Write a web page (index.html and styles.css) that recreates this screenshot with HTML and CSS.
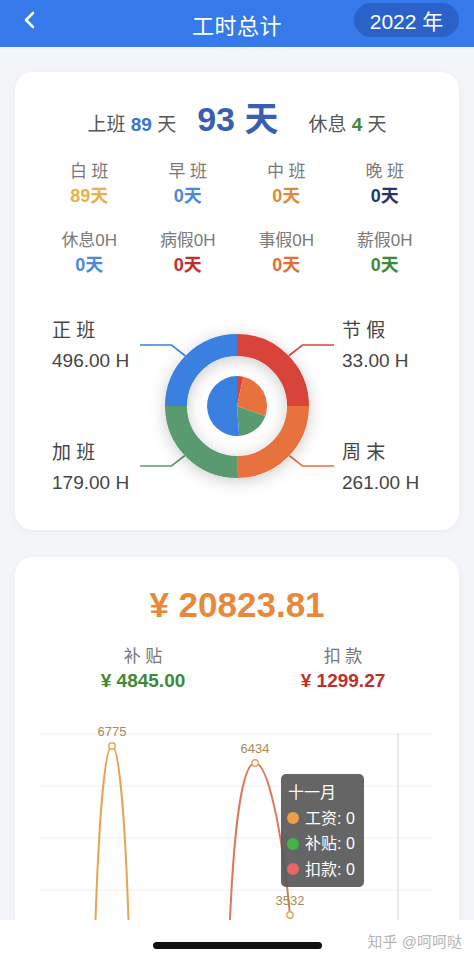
FILE: index.html
```html
<!DOCTYPE html>
<html lang="zh-CN">
<head>
  <meta charset="UTF-8" />
  <meta name="viewport" content="width=device-width, initial-scale=1" />
  <title>工时总计</title>
  <link rel="stylesheet" href="styles.css">
</head>
<body>
  <header class="topbar">
    <svg class="back" width="14" height="18" viewBox="0 0 14 18">
      <path d="M10 2 L3 9 L10 16" fill="none" stroke="#fff" stroke-width="2.6" stroke-linecap="round" stroke-linejoin="round"/>
    </svg>
    <h1>工时总计</h1>
    <div class="year">2022 年</div>
  </header>

  <main>
    <!-- Attendance card -->
    <section class="card days-card">
      <div class="summary">
        <span>上班 <b class="blue">89</b> 天</span>
        <span class="total">93 天</span>
        <span>休息 <b class="green">4</b> 天</span>
      </div>

      <div class="shift-grid">
        <div class="cell"><div class="label">白 班</div><div class="value gold">89天</div></div>
        <div class="cell"><div class="label">早 班</div><div class="value sky">0天</div></div>
        <div class="cell"><div class="label">中 班</div><div class="value amber">0天</div></div>
        <div class="cell"><div class="label">晚 班</div><div class="value navy">0天</div></div>
        <div class="cell"><div class="label">休息0H</div><div class="value sky">0天</div></div>
        <div class="cell"><div class="label">病假0H</div><div class="value red">0天</div></div>
        <div class="cell"><div class="label">事假0H</div><div class="value orange">0天</div></div>
        <div class="cell"><div class="label">薪假0H</div><div class="value green">0天</div></div>
      </div>

      <div class="hours">
        <div class="side left">
          <div class="tag"><div>正 班</div><div>496.00 H</div></div>
          <div class="tag"><div>加 班</div><div>179.00 H</div></div>
        </div>
        <svg class="donut" width="194" height="210" viewBox="0 0 194 210">
          <defs>
            <filter id="glow" x="-40%" y="-40%" width="180%" height="180%">
              <feDropShadow dx="0" dy="3" stdDeviation="8" flood-color="#000" flood-opacity="0.2"/>
            </filter>
          </defs>
          <!-- leader lines -->
          <polyline points="0,45 31.5,45 45.5,56" fill="none" stroke="#3a80e0" stroke-width="1.6"/>
          <polyline points="194,45 162.5,45 148.5,56" fill="none" stroke="#d9443a" stroke-width="1.6"/>
          <polyline points="0,166 31.5,166 45.5,155" fill="none" stroke="#5a9a70" stroke-width="1.6"/>
          <polyline points="194,166 162.5,166 148.5,155" fill="none" stroke="#e8723e" stroke-width="1.6"/>
          <g filter="url(#glow)">
            <circle cx="97" cy="106" r="61" fill="none" stroke="#fff" stroke-width="22"/>
          </g>
          <path d="M36 106 A61 61 0 0 1 97 45" fill="none" stroke="#3a80e0" stroke-width="22"/>
          <path d="M97 45 A61 61 0 0 1 158 106" fill="none" stroke="#d9443a" stroke-width="22"/>
          <path d="M158 106 A61 61 0 0 1 97 167" fill="none" stroke="#e8723e" stroke-width="22"/>
          <path d="M97 167 A61 61 0 0 1 36 106" fill="none" stroke="#5a9a70" stroke-width="22"/>
          <!-- inner pie: 33 / 261 / 179 / 496 -->
          <path d="M97 106 L97 76 A30 30 0 0 1 103.39 76.69 Z" fill="#d9443a"/>
          <path d="M97 106 L103.39 76.69 A30 30 0 0 1 125.31 115.92 Z" fill="#e8723e"/>
          <path d="M97 106 L125.31 115.92 A30 30 0 0 1 99.2 135.92 Z" fill="#5a9a70"/>
          <path d="M97 106 L99.2 135.92 A30 30 0 1 1 97 76 Z" fill="#3a80e0"/>
        </svg>
        <div class="side right">
          <div class="tag"><div>节 假</div><div>33.00 H</div></div>
          <div class="tag"><div>周 末</div><div>261.00 H</div></div>
        </div>
      </div>
    </section>

    <!-- Salary card -->
    <section class="card pay-card">
      <div class="amount">¥ 20823.81</div>
      <div class="pay-grid">
        <div class="cell"><div class="label">补 贴</div><div class="money green">¥ 4845.00</div></div>
        <div class="cell"><div class="label">扣 款</div><div class="money red">¥ 1299.27</div></div>
      </div>

      <div class="chart">
        <svg width="444" height="230" viewBox="15 715 444 230">
          <g stroke="#efefef" stroke-width="1">
            <line x1="40" y1="734" x2="432" y2="734"/>
            <line x1="40" y1="786" x2="432" y2="786"/>
            <line x1="40" y1="838" x2="432" y2="838"/>
            <line x1="40" y1="890" x2="432" y2="890"/>
          </g>
          <line x1="398" y1="733" x2="398" y2="945" stroke="#dedede" stroke-width="1.2"/>
          <path d="M95 935 C103 683 121 683 129 935" fill="none" stroke="#e6a457" stroke-width="2"/>
          <path d="M229 945 C233 830 242 763 255 763 C268 763 282 830 290 915" fill="none" stroke="#db7a5a" stroke-width="2"/>
          <circle cx="112" cy="746" r="3.2" fill="#fff" stroke="#e6a457" stroke-width="1.4"/>
          <circle cx="255" cy="763" r="3.2" fill="#fff" stroke="#e6a457" stroke-width="1.4"/>
          <circle cx="290" cy="915" r="3.2" fill="#fff" stroke="#e6a457" stroke-width="1.4"/>
          <g class="point-label">
            <text x="112" y="736" text-anchor="middle">6775</text>
            <text x="255" y="753" text-anchor="middle">6434</text>
            <text x="290" y="905" text-anchor="middle">3532</text>
          </g>
        </svg>
        <div class="tooltip">
          <div class="tip-title">十一月</div>
          <div class="tip-row"><i class="dot" style="background:#f0a044"></i>工资: 0</div>
          <div class="tip-row"><i class="dot" style="background:#43b343"></i>补贴: 0</div>
          <div class="tip-row"><i class="dot" style="background:#ea6565"></i>扣款: 0</div>
        </div>
      </div>
    </section>
  </main>

  <div class="home-bar">
    <span class="indicator"></span>
    <span class="mark">知乎 @呵呵哒</span>
  </div>
</body>
</html>
```

FILE: styles.css
```css
html, body {
  overflow: hidden;
}

body {
  margin: 0;
  font-family: "Liberation Sans", "Noto Sans CJK SC", sans-serif;
  background: #f3f5f8;
  color: #444;
  height: 961px;
}

.topbar {
  height: 47px;
  background: #3579ea;
  display: flex;
  align-items: center;
  justify-content: center;
  position: relative;
}

.topbar h1 {
  margin: 0;
  color: #fff;
  font-size: 22px;
  font-weight: 400;
  letter-spacing: 0.5px;
}

.back {
  position: absolute;
  left: 23px;
  top: 11px;
}

.year {
  position: absolute;
  right: 15px;
  top: 3px;
  width: 105px;
  height: 34px;
  border-radius: 17px;
  background: #2a62c9;
  color: #fff;
  font-size: 21px;
  display: flex;
  align-items: center;
  justify-content: center;
}

main {
  padding: 25px 15px 0;
  display: flex;
  flex-direction: column;
  gap: 27px;
}

.card {
  background: #fff;
  border-radius: 18px;
  box-shadow: 0 2px 10px rgba(0, 0, 0, 0.04);
}

/* attendance */
.days-card {
  padding: 27px 25px 20px;
}

.summary {
  display: flex;
  justify-content: center;
  align-items: baseline;
  font-size: 19px;
  line-height: 40px;
  color: #555;
}

.summary b {
  font-weight: 700;
}

.summary .total {
  margin: 0 30px 0 21px;
  font-size: 34px;
  font-weight: 700;
  color: #3a5fb2;
}

.shift-grid {
  margin-top: 15px;
  display: grid;
  grid-template-columns: repeat(4, 1fr);
  row-gap: 20px;
  text-align: center;
}

.shift-grid .label {
  font-size: 17px;
  line-height: 24px;
  color: #7a7a7a;
}

.shift-grid .value {
  font-size: 18px;
  line-height: 25px;
  font-weight: 700;
}

.gold { color: #e8b04b; }
.sky { color: #4a8ad8; }
.amber { color: #e0893a; }
.navy { color: #22376a; }
.red { color: #bf2f2b; }
.orange { color: #e0703a; }
.green { color: #3e8a36; }
.blue { color: #3c74c8; }

.hours {
  margin-top: 22px;
  display: grid;
  grid-template-columns: 1fr 194px 1fr;
  height: 210px;
}

.side {
  display: flex;
  flex-direction: column;
  justify-content: space-between;
  padding: 16px 0 12px;
  font-size: 19px;
  line-height: 30px;
  color: #444;
}

.side.left {
  padding-left: 12px;
}

.side.right {
  padding-left: 8px;
}

.donut {
  display: block;
  overflow: visible;
}

/* salary */
.pay-card {
  padding-top: 28px;
  height: 420px;
}

.amount {
  text-align: center;
  font-size: 35px;
  line-height: 40px;
  font-weight: 700;
  color: #e8883a;
}

.pay-grid {
  margin: 20px 0 0 28px;
  display: grid;
  grid-template-columns: 200px 200px;
  text-align: center;
}

.pay-grid .label {
  font-size: 17px;
  line-height: 24px;
  color: #777;
}

.pay-grid .money {
  font-size: 19px;
  line-height: 24px;
  font-weight: 700;
}

.chart {
  margin-top: 22px;
  position: relative;
}

.chart svg {
  display: block;
}

.point-label {
  font-size: 13px;
  fill: #a98a58;
}

.tooltip {
  position: absolute;
  left: 266px;
  top: 59px;
  width: 83px;
  height: 113px;
  box-sizing: border-box;
  padding: 6px 0 0 6px;
  border-radius: 5px;
  background: rgba(88, 88, 88, 0.92);
  color: #fff;
  font-size: 16px;
  line-height: 25.5px;
}

.tip-title {
  padding-left: 1px;
}

.tip-row {
  display: flex;
  align-items: center;
  gap: 6px;
  white-space: nowrap;
}

.dot {
  width: 12px;
  height: 12px;
  border-radius: 50%;
}

.home-bar {
  position: fixed;
  left: 0;
  right: 0;
  bottom: 0;
  height: 41px;
  background: #fff;
}

.indicator {
  position: absolute;
  left: 153px;
  top: 22px;
  width: 169px;
  height: 7px;
  border-radius: 4px;
  background: #111;
}

.mark {
  position: absolute;
  right: 12px;
  top: 10px;
  font-size: 15px;
  color: #b5b5b5;
}
```
